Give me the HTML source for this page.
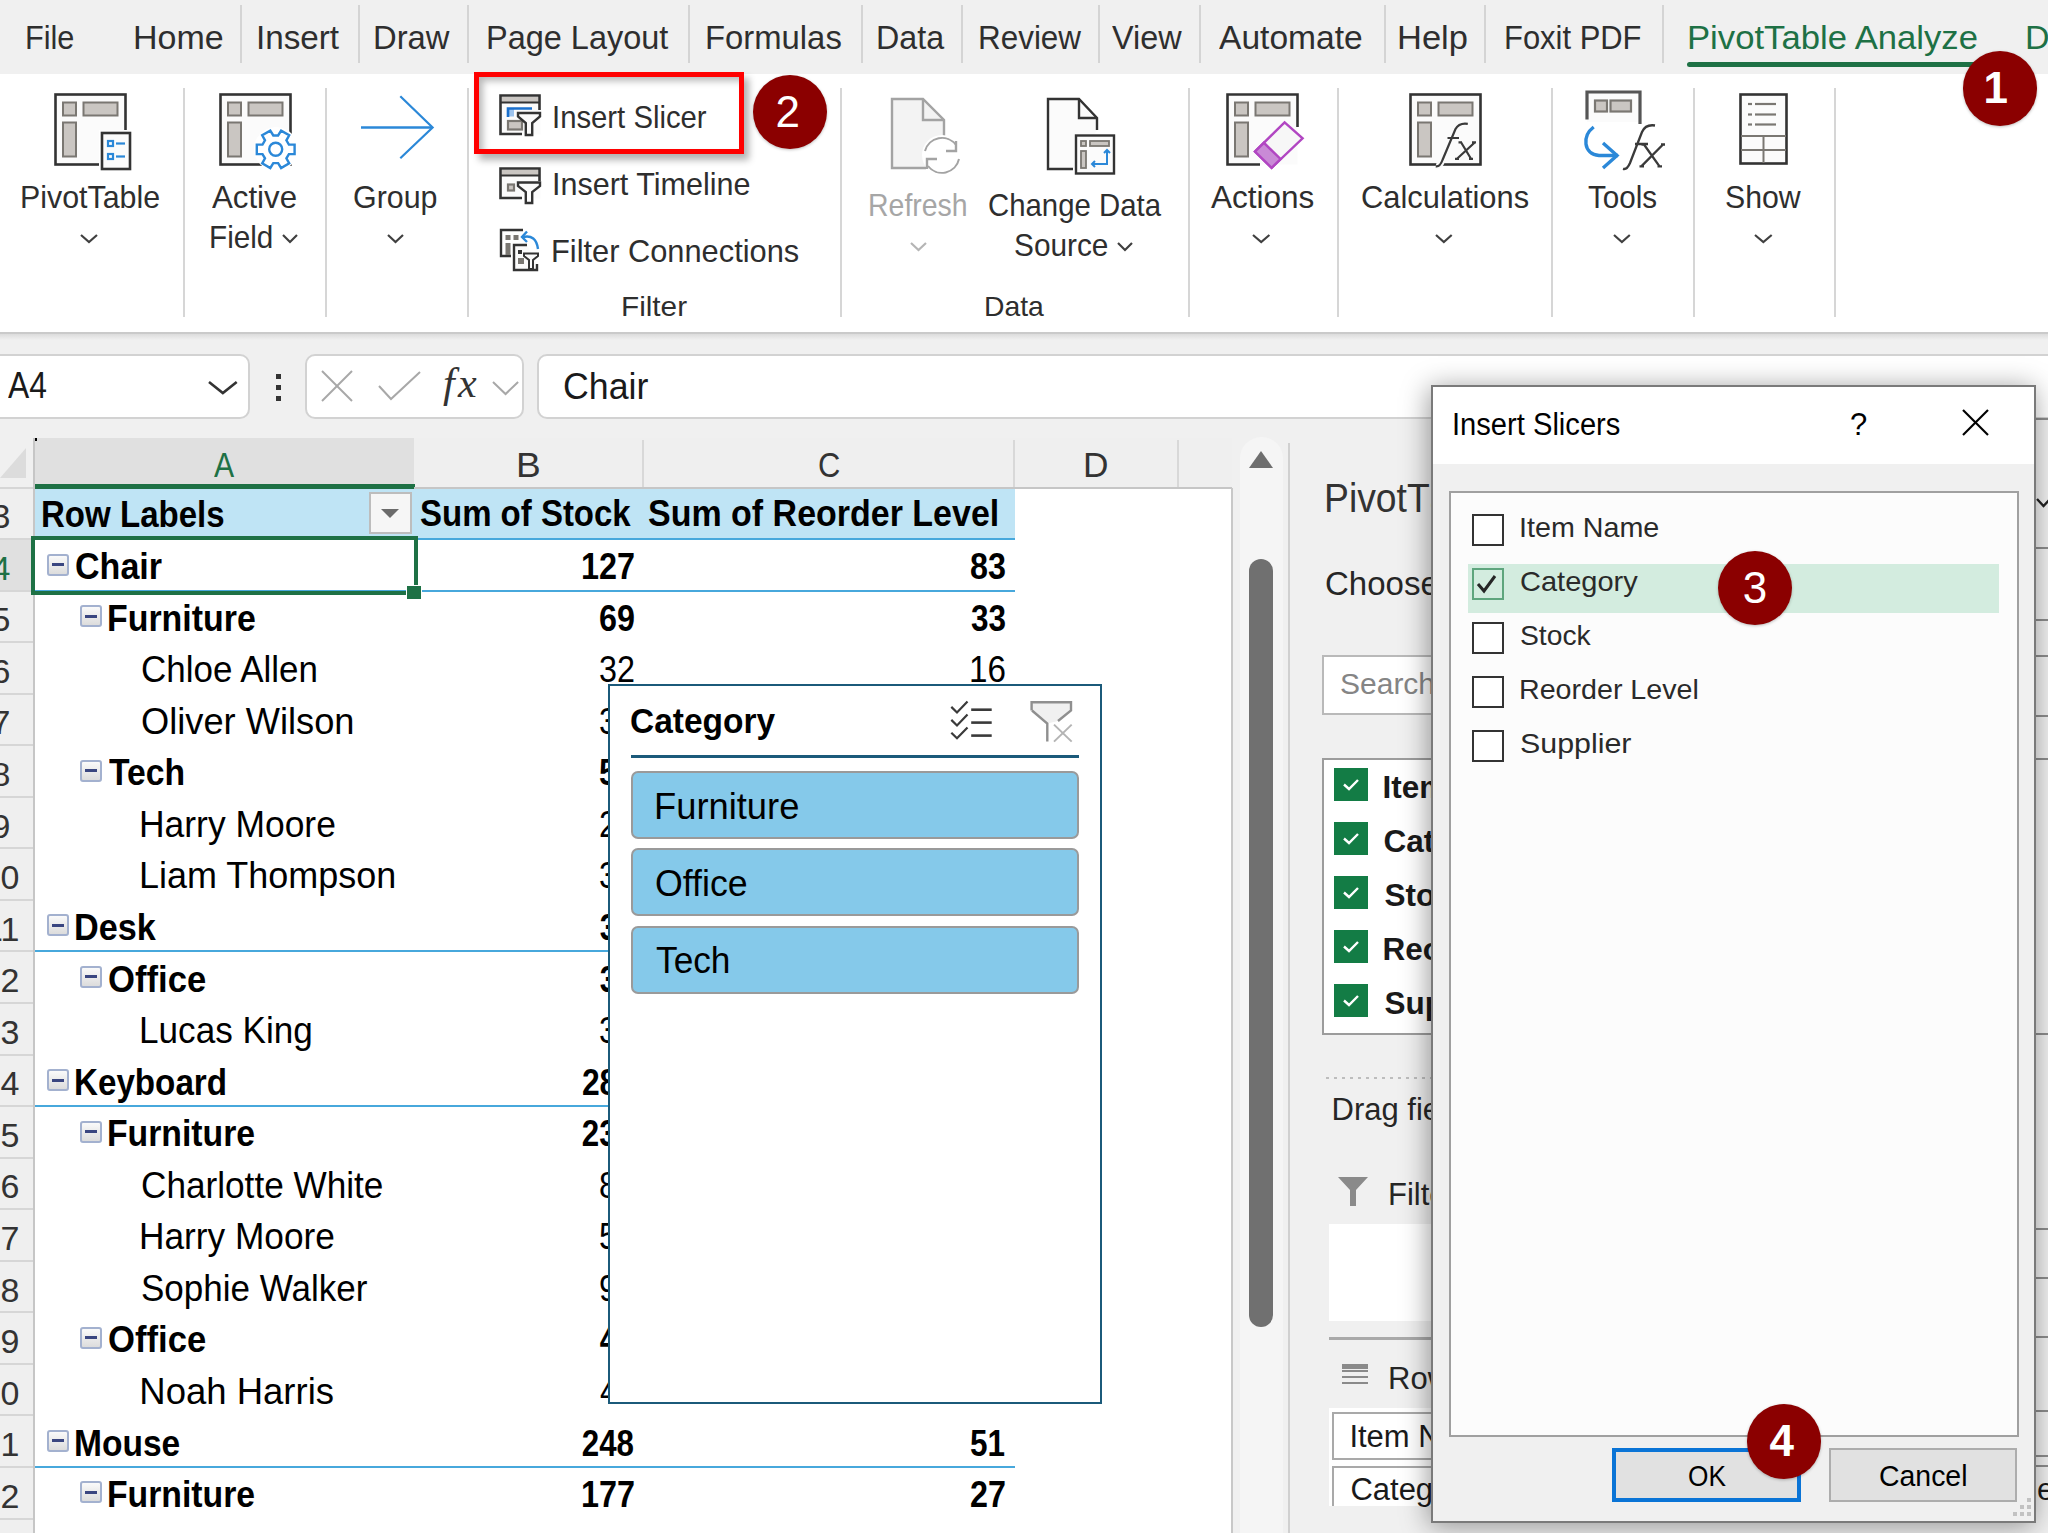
<!DOCTYPE html>
<html><head><meta charset="utf-8"><style>
html,body{margin:0;padding:0;}
body{width:2048px;height:1533px;overflow:hidden;position:relative;background:#f0f0f0;font-family:"Liberation Sans",sans-serif;}
.a{position:absolute;}
.t{position:absolute;white-space:nowrap;line-height:1;transform-origin:left;}
svg.a{overflow:visible;}
</style></head><body>
<div class="a" style="left:0px;top:0px;width:2048px;height:74px;background:#f0f0f0"></div>
<div class="t" style="left:24.9px;top:20.2px;font-size:34px;font-weight:400;color:#2e2e2e;transform:scaleX(0.9022);">File</div>
<div class="t" style="left:133.0px;top:20.2px;font-size:34px;font-weight:400;color:#2e2e2e;">Home</div>
<div class="t" style="left:255.8px;top:20.2px;font-size:34px;font-weight:400;color:#2e2e2e;transform:scaleX(0.9772);">Insert</div>
<div class="t" style="left:373.1px;top:20.2px;font-size:34px;font-weight:400;color:#2e2e2e;transform:scaleX(0.9642);">Draw</div>
<div class="t" style="left:486.1px;top:20.2px;font-size:34px;font-weight:400;color:#2e2e2e;transform:scaleX(0.9552);">Page Layout</div>
<div class="t" style="left:704.8px;top:20.2px;font-size:34px;font-weight:400;color:#2e2e2e;transform:scaleX(0.9654);">Formulas</div>
<div class="t" style="left:875.6px;top:20.2px;font-size:34px;font-weight:400;color:#2e2e2e;transform:scaleX(0.9484);">Data</div>
<div class="t" style="left:978.2px;top:20.2px;font-size:34px;font-weight:400;color:#2e2e2e;transform:scaleX(0.9243);">Review</div>
<div class="t" style="left:1112.0px;top:20.2px;font-size:34px;font-weight:400;color:#2e2e2e;transform:scaleX(0.9520);">View</div>
<div class="t" style="left:1219.0px;top:20.2px;font-size:34px;font-weight:400;color:#2e2e2e;transform:scaleX(0.9874);">Automate</div>
<div class="t" style="left:1397.0px;top:20.2px;font-size:34px;font-weight:400;color:#2e2e2e;transform:scaleX(1.0147);">Help</div>
<div class="t" style="left:1504.2px;top:20.2px;font-size:34px;font-weight:400;color:#2e2e2e;transform:scaleX(0.9100);">Foxit PDF</div>
<div class="t" style="left:1686.7px;top:20.2px;font-size:34px;font-weight:400;color:#1e7145;transform:scaleX(1.0195);">PivotTable Analyze</div>
<div class="t" style="left:2025.0px;top:20.2px;font-size:34px;font-weight:400;color:#1e7145;">D</div>
<div class="a" style="left:240px;top:5px;width:2px;height:58px;background:#d4d4d4"></div>
<div class="a" style="left:358px;top:5px;width:2px;height:58px;background:#d4d4d4"></div>
<div class="a" style="left:466.5px;top:5px;width:2px;height:58px;background:#d4d4d4"></div>
<div class="a" style="left:688px;top:5px;width:2px;height:58px;background:#d4d4d4"></div>
<div class="a" style="left:860.8px;top:5px;width:2px;height:58px;background:#d4d4d4"></div>
<div class="a" style="left:961.3px;top:5px;width:2px;height:58px;background:#d4d4d4"></div>
<div class="a" style="left:1097.7px;top:5px;width:2px;height:58px;background:#d4d4d4"></div>
<div class="a" style="left:1198.5px;top:5px;width:2px;height:58px;background:#d4d4d4"></div>
<div class="a" style="left:1383.6px;top:5px;width:2px;height:58px;background:#d4d4d4"></div>
<div class="a" style="left:1484.4px;top:5px;width:2px;height:58px;background:#d4d4d4"></div>
<div class="a" style="left:1662px;top:5px;width:2px;height:58px;background:#d4d4d4"></div>
<div class="a" style="left:1687px;top:61.5px;width:296px;height:5px;background:#1e7145;border-radius:3px"></div>
<div class="a" style="left:0px;top:346px;width:2048px;height:0px;box-shadow:0 -4px 10px rgba(0,0,0,0.10)"></div>
<div class="a" style="left:0px;top:74px;width:2048px;height:260px;background:#ffffff;border-bottom:2px solid #cacaca;box-sizing:border-box"></div>
<div class="a" style="left:0px;top:334px;width:2048px;height:6px;background:linear-gradient(#dcdcdc,#f0f0f0)"></div>
<div class="a" style="left:183px;top:88px;width:2px;height:229px;background:#d6d6d6"></div>
<div class="a" style="left:324.8px;top:88px;width:2px;height:229px;background:#d6d6d6"></div>
<div class="a" style="left:466.5px;top:88px;width:2px;height:229px;background:#d6d6d6"></div>
<div class="a" style="left:840px;top:88px;width:2px;height:229px;background:#d6d6d6"></div>
<div class="a" style="left:1188px;top:88px;width:2px;height:229px;background:#d6d6d6"></div>
<div class="a" style="left:1336.7px;top:88px;width:2px;height:229px;background:#d6d6d6"></div>
<div class="a" style="left:1551px;top:88px;width:2px;height:229px;background:#d6d6d6"></div>
<div class="a" style="left:1692.7px;top:88px;width:2px;height:229px;background:#d6d6d6"></div>
<div class="a" style="left:1834px;top:88px;width:2px;height:229px;background:#d6d6d6"></div>
<div class="t" style="left:20.4px;top:181.5px;font-size:31.5px;font-weight:400;color:#2e2e2e;transform:scaleX(0.9642);">PivotTable</div>
<div class="t" style="left:212.0px;top:181.5px;font-size:31.5px;font-weight:400;color:#2e2e2e;transform:scaleX(0.9911);">Active</div>
<div class="t" style="left:209.1px;top:222.3px;font-size:31.5px;font-weight:400;color:#2e2e2e;transform:scaleX(0.9420);">Field</div>
<div class="t" style="left:353.0px;top:181.5px;font-size:31.5px;font-weight:400;color:#2e2e2e;transform:scaleX(0.9648);">Group</div>
<div class="t" style="left:551.5px;top:102.1px;font-size:31.5px;font-weight:400;color:#2e2e2e;transform:scaleX(0.9297);">Insert Slicer</div>
<div class="t" style="left:551.5px;top:168.7px;font-size:31.5px;font-weight:400;color:#2e2e2e;transform:scaleX(0.9691);">Insert Timeline</div>
<div class="t" style="left:551.4px;top:235.7px;font-size:31.5px;font-weight:400;color:#2e2e2e;transform:scaleX(0.9777);">Filter Connections</div>
<div class="t" style="left:620.9px;top:292.1px;font-size:28.5px;font-weight:400;color:#2e2e2e;transform:scaleX(1.0430);">Filter</div>
<div class="t" style="left:868.2px;top:189.8px;font-size:31.5px;font-weight:400;color:#a6a6a6;transform:scaleX(0.9037);">Refresh</div>
<div class="t" style="left:987.6px;top:189.8px;font-size:31.5px;font-weight:400;color:#2e2e2e;transform:scaleX(0.9319);">Change Data</div>
<div class="t" style="left:1014.1px;top:230.3px;font-size:31.5px;font-weight:400;color:#2e2e2e;transform:scaleX(0.9462);">Source</div>
<div class="t" style="left:984.0px;top:292.1px;font-size:28.5px;font-weight:400;color:#2e2e2e;transform:scaleX(0.9940);">Data</div>
<div class="t" style="left:1211.0px;top:181.9px;font-size:31.5px;font-weight:400;color:#2e2e2e;">Actions</div>
<div class="t" style="left:1360.6px;top:181.9px;font-size:31.5px;font-weight:400;color:#2e2e2e;transform:scaleX(0.9798);">Calculations</div>
<div class="t" style="left:1587.6px;top:181.9px;font-size:31.5px;font-weight:400;color:#2e2e2e;transform:scaleX(0.9397);">Tools</div>
<div class="t" style="left:1725.0px;top:181.9px;font-size:31.5px;font-weight:400;color:#2e2e2e;transform:scaleX(0.9609);">Show</div>
<svg class="a" style="left:79px;top:233px" width="20" height="11"><polyline points="2,2 10.0,9 18,2" fill="none" stroke="#404040" stroke-width="2.2"/></svg>
<svg class="a" style="left:386px;top:233px" width="19" height="11"><polyline points="2,2 9.5,9 17,2" fill="none" stroke="#404040" stroke-width="2.2"/></svg>
<svg class="a" style="left:1250.6px;top:233px" width="20.40000000000009" height="11"><polyline points="2,2 10.200000000000045,9 18.40000000000009,2" fill="none" stroke="#404040" stroke-width="2.2"/></svg>
<svg class="a" style="left:1434px;top:233px" width="19.700000000000045" height="11"><polyline points="2,2 9.850000000000023,9 17.700000000000045,2" fill="none" stroke="#404040" stroke-width="2.2"/></svg>
<svg class="a" style="left:1611.7px;top:233px" width="19.799999999999955" height="11"><polyline points="2,2 9.899999999999977,9 17.799999999999955,2" fill="none" stroke="#404040" stroke-width="2.2"/></svg>
<svg class="a" style="left:1753px;top:233px" width="20.700000000000045" height="11"><polyline points="2,2 10.350000000000023,9 18.700000000000045,2" fill="none" stroke="#404040" stroke-width="2.2"/></svg>
<svg class="a" style="left:281px;top:233px" width="18" height="11"><polyline points="2,2 9.0,9 16,2" fill="none" stroke="#404040" stroke-width="2.2"/></svg>
<svg class="a" style="left:909px;top:241px" width="19" height="11"><polyline points="2,2 9.5,9 17,2" fill="none" stroke="#b5b5b5" stroke-width="2.2"/></svg>
<svg class="a" style="left:1116px;top:241px" width="18" height="11"><polyline points="2,2 9.0,9 16,2" fill="none" stroke="#404040" stroke-width="2.2"/></svg>
<svg class="a" style="left:54px;top:92.7px" width="80" height="80" viewBox="0 0 80 80"><rect x="1.5" y="1.5" width="70" height="70" fill="#fbfbfb" stroke="#333333" stroke-width="2.6"/><rect x="9" y="9.5" width="13" height="13" fill="#cac6c2" stroke="#7a7772" stroke-width="2"/><rect x="29.5" y="9.5" width="34" height="13" fill="#cac6c2" stroke="#7a7772" stroke-width="2"/><rect x="9" y="29.5" width="13" height="34" fill="#cac6c2" stroke="#7a7772" stroke-width="2"/><rect x="45" y="37" width="35" height="43" fill="#ffffff"/><rect x="48" y="40" width="28" height="36" fill="#fbfbfb" stroke="#333333" stroke-width="2.6"/><rect x="54" y="48" width="5" height="5" fill="none" stroke="#2b88d8" stroke-width="2.2"/><line x1="62" y1="50.5" x2="71" y2="50.5" stroke="#2b88d8" stroke-width="2.2"/><rect x="54" y="61" width="5" height="5" fill="none" stroke="#2b88d8" stroke-width="2.2"/><line x1="62" y1="63.5" x2="71" y2="63.5" stroke="#2b88d8" stroke-width="2.2"/></svg>
<svg class="a" style="left:219px;top:92.7px" width="80" height="80" viewBox="0 0 80 80"><rect x="1.5" y="1.5" width="70" height="70" fill="#fbfbfb" stroke="#333333" stroke-width="2.6"/><rect x="9" y="9.5" width="13" height="13" fill="#cac6c2" stroke="#7a7772" stroke-width="2"/><rect x="29.5" y="9.5" width="34" height="13" fill="#cac6c2" stroke="#7a7772" stroke-width="2"/><rect x="9" y="29.5" width="13" height="34" fill="#cac6c2" stroke="#7a7772" stroke-width="2"/><circle cx="57" cy="56" r="22" fill="#ffffff"/><polygon points="75.6,51.6 75.6,61.0 69.9,61.1 67.4,65.3 70.2,70.3 62.1,75.0 59.1,70.1 54.3,70.1 51.3,75.0 43.2,70.3 46.0,65.3 43.5,61.1 37.8,61.0 37.8,51.6 43.5,51.5 46.0,47.3 43.2,42.3 51.3,37.6 54.3,42.5 59.1,42.5 62.1,37.6 70.2,42.3 67.4,47.3 69.9,51.5" fill="#ffffff" stroke="#2b88d8" stroke-width="2.4"/><circle cx="56.7" cy="56.3" r="6.5" fill="none" stroke="#2b88d8" stroke-width="2.4"/></svg>
<svg class="a" style="left:355px;top:92px" width="85" height="72"><line x1="6" y1="35.5" x2="77" y2="35.5" stroke="#2b88d8" stroke-width="2.6"/><polyline points="45.3,4.3 77.6,35.5 45.3,66.3" fill="none" stroke="#2b88d8" stroke-width="2.2"/></svg>
<svg class="a" style="left:498px;top:94px" width="46" height="46" viewBox="0 0 46 46"><rect x="2.5" y="1.5" width="40" height="39" fill="#fbfbfb"/><path d="M 24 40 L 2.5 40 L 2.5 1.5 L 41.5 1.5 L 41.5 16" fill="none" stroke="#333333" stroke-width="2.6"/><rect x="4" y="3" width="36" height="5" fill="#cac6c2"/><line x1="2.5" y1="8.5" x2="41.5" y2="8.5" stroke="#333333" stroke-width="2.2"/><rect x="10" y="14.5" width="6" height="8" fill="#9cc3ee"/><path d="M 10 23 L 10 14.5 L 34 14.5" fill="none" stroke="#1a6fcc" stroke-width="2.6"/><rect x="10" y="27" width="14" height="8.5" fill="#cac6c2" stroke="#7a7772" stroke-width="2.2"/><path d="M 20 19 L 42 19 L 42 22.5 L 34.2 29 L 34.2 41 L 27.8 41 L 27.8 29 L 20 22.5 Z" fill="#fbfbfb" stroke="#333333" stroke-width="2.4" stroke-linejoin="miter"/></svg>
<svg class="a" style="left:498px;top:166.5px" width="46" height="46" viewBox="0 0 46 46"><rect x="2.5" y="1.5" width="40" height="30" fill="#fbfbfb"/><path d="M 24 31 L 2.5 31 L 2.5 1.5 L 41.5 1.5 L 41.5 14" fill="none" stroke="#333333" stroke-width="2.6"/><rect x="4" y="3" width="36" height="5" fill="#cac6c2"/><line x1="2.5" y1="8.5" x2="41.5" y2="8.5" stroke="#333333" stroke-width="2.2"/><rect x="10" y="17.5" width="6" height="6" fill="#cac6c2" stroke="#7a7772" stroke-width="2.2"/><path d="M 20 15.5 L 42 15.5 L 42 19 L 34.2 25 L 34.2 36 L 27.8 36 L 27.8 25 L 20 19 Z" fill="#fbfbfb" stroke="#333333" stroke-width="2.4" stroke-linejoin="miter"/></svg>
<svg class="a" style="left:499px;top:228px" width="44" height="44" viewBox="0 0 44 44"><path d="M 24 2 L 2 2 L 2 28 L 12 28" fill="none" stroke="#333333" stroke-width="2.4"/><rect x="6.5" y="7" width="5" height="5" fill="#7a7772"/><rect x="14.5" y="7" width="5" height="5" fill="#7a7772"/><rect x="6.5" y="15" width="5" height="12" fill="#7a7772"/><path d="M 28 17 L 15 17 L 15 42 L 38 42 L 38 36" fill="#fbfbfb" stroke="#333333" stroke-width="2.4"/><rect x="19" y="22" width="4" height="4" fill="#333333"/><rect x="19" y="30" width="6" height="6" fill="#7a7772"/><path d="M 25 25.5 L 39 25.5 L 39 28 L 34 32 L 34 41 L 30 41 L 30 32 L 25 28 Z" fill="#fbfbfb" stroke="#333333" stroke-width="2"/><path d="M 24 9 Q 37 6 39 21" fill="none" stroke="#2b88d8" stroke-width="2.4"/><polyline points="28,3.5 23,9 28,14" fill="none" stroke="#2b88d8" stroke-width="2.4"/></svg>
<svg class="a" style="left:889px;top:96px" width="62" height="80" viewBox="0 0 62 80"><path d="M 37 72 L 3 72 L 3 3 L 34 3 L 55 24 L 55 40" fill="#f3f3f3" stroke="#a3a3a3" stroke-width="2.4"/><path d="M 34 3 L 34 24 L 55 24" fill="none" stroke="#a3a3a3" stroke-width="2.4"/><circle cx="53" cy="59" r="20" fill="#ffffff"/><path d="M 36 55 A 17.5 17.5 0 0 1 67 49" fill="none" stroke="#a3a3a3" stroke-width="2"/><path d="M 70 63 A 17.5 17.5 0 0 1 39 70" fill="none" stroke="#a3a3a3" stroke-width="2"/><polyline points="57,55 67,55 67,45" fill="none" stroke="#a3a3a3" stroke-width="2.4"/><polyline points="48,63 38,63 38,73" fill="none" stroke="#a3a3a3" stroke-width="2.4"/></svg>
<svg class="a" style="left:1045px;top:96px" width="74" height="82" viewBox="0 0 74 82"><path d="M 28 73 L 3 73 L 3 3 L 34 3 L 52 22 L 52 34" fill="#fbfbfb" stroke="#333333" stroke-width="2.4"/><path d="M 34 3 L 34 22 L 52 22" fill="none" stroke="#333333" stroke-width="2.4"/><rect x="31" y="39.5" width="38" height="38" fill="#fbfbfb" stroke="#333333" stroke-width="2.4"/><rect x="36" y="45" width="5" height="5" fill="#cac6c2" stroke="#7a7772" stroke-width="1.8"/><rect x="45" y="45" width="19" height="5" fill="#cac6c2" stroke="#7a7772" stroke-width="1.8"/><rect x="36" y="55" width="5" height="17" fill="#cac6c2" stroke="#7a7772" stroke-width="1.8"/><polyline points="47,68 62,68 62,54" fill="none" stroke="#2b88d8" stroke-width="2"/><polyline points="59,57 62,54 65,57" fill="none" stroke="#2b88d8" stroke-width="2"/><polyline points="50,65 47,68 50,71" fill="none" stroke="#2b88d8" stroke-width="2"/></svg>
<svg class="a" style="left:1226.4px;top:93.2px" width="82" height="80" viewBox="0 0 82 80"><rect x="1.5" y="1.5" width="70" height="70" fill="#fbfbfb"/><path d="M 34 71.5 L 1.5 71.5 L 1.5 1.5 L 71.5 1.5 L 71.5 34" fill="none" stroke="#333333" stroke-width="2.6"/><rect x="9" y="9.5" width="13" height="13" fill="#cac6c2" stroke="#7a7772" stroke-width="2"/><rect x="29.5" y="9.5" width="34" height="13" fill="#cac6c2" stroke="#7a7772" stroke-width="2"/><rect x="9" y="29.5" width="13" height="34" fill="#cac6c2" stroke="#7a7772" stroke-width="2"/><polygon points="58.6,29.3 76.6,45.4 45.6,74.8 29,58.6" fill="#f7f7f7" stroke="#b146c2" stroke-width="2.4"/><polygon points="29,58.6 45.6,74.8 54.5,66 37.9,49.8" fill="#c98ad6" stroke="#b146c2" stroke-width="2.4"/></svg>
<svg class="a" style="left:1409.2px;top:93.2px" width="80" height="80" viewBox="0 0 80 80"><rect x="1.5" y="1.5" width="70" height="70" fill="#fbfbfb" stroke="#333333" stroke-width="2.6"/><rect x="9" y="9.5" width="13" height="13" fill="#cac6c2" stroke="#7a7772" stroke-width="2"/><rect x="29.5" y="9.5" width="34" height="13" fill="#cac6c2" stroke="#7a7772" stroke-width="2"/><rect x="9" y="29.5" width="13" height="34" fill="#cac6c2" stroke="#7a7772" stroke-width="2"/><path d="M 26.8 73.3 Q 31 74 33.5 67 L 46.5 36 Q 50 29.5 58.8 30.8 M 38.5 45 L 50 45 M 52 49.3 L 62 65.8 M 66 49.3 L 48 65.8 M 49.5 49.3 L 53 49.3 M 63 49.3 L 67 49.3 M 46 65.8 L 50 65.8 M 60 65.8 L 64 65.8" fill="none" stroke="#fbfbfb" stroke-width="6"/><path d="M 26.8 73.3 Q 31 74 33.5 67 L 46.5 36 Q 50 29.5 58.8 30.8 M 38.5 45 L 50 45 M 52 49.3 L 62 65.8 M 66 49.3 L 48 65.8 M 49.5 49.3 L 53 49.3 M 63 49.3 L 67 49.3 M 46 65.8 L 50 65.8 M 60 65.8 L 64 65.8" fill="none" stroke="#3a3a3a" stroke-width="2.2"/></svg>
<svg class="a" style="left:1583px;top:88px" width="90" height="86" viewBox="0 0 90 86"><rect x="4" y="4" width="53" height="30" fill="#fbfbfb"/><path d="M 4 31.5 L 4 4 L 57 4 L 57 36" fill="none" stroke="#555" stroke-width="3.2"/><rect x="12" y="12.5" width="12" height="11" fill="#cac6c2" stroke="#7a7772" stroke-width="2.2"/><rect x="27.5" y="12.5" width="20.5" height="11" fill="#cac6c2" stroke="#7a7772" stroke-width="2.2"/><path d="M 10.7 39 C -1 48 0 66 16 67.5 L 35 67.5" fill="none" stroke="#2b88d8" stroke-width="3.4"/><polyline points="20,55 34,67.5 20,80" fill="none" stroke="#2b88d8" stroke-width="3.4"/><path d="M 40 80.8 Q 44 82 47 75 L 59 44 Q 62.5 36 72 37.5 M 52 56 L 65 56 M 61 56.5 L 76.5 78.4 M 80 56.5 L 58.3 78.4 M 58.5 56.5 L 62.5 56.5 M 78 56.5 L 82 56.5 M 56.5 78.4 L 61 78.4 M 74.5 78.4 L 79 78.4" fill="none" stroke="#3a3a3a" stroke-width="2.3"/></svg>
<svg class="a" style="left:1738px;top:92px" width="52" height="74" viewBox="0 0 52 74"><rect x="2.5" y="2.5" width="46" height="69" fill="#fbfbfb" stroke="#333333" stroke-width="2.6"/><line x1="10" y1="12" x2="14" y2="12" stroke="#7a7772" stroke-width="2.2"/><line x1="17" y1="12" x2="38" y2="12" stroke="#7a7772" stroke-width="2.2"/><line x1="10" y1="22.5" x2="14" y2="22.5" stroke="#7a7772" stroke-width="2.2"/><line x1="17" y1="22.5" x2="38" y2="22.5" stroke="#7a7772" stroke-width="2.2"/><line x1="10" y1="32.5" x2="14" y2="32.5" stroke="#7a7772" stroke-width="2.2"/><line x1="17" y1="32.5" x2="38" y2="32.5" stroke="#7a7772" stroke-width="2.2"/><line x1="3" y1="44" x2="48" y2="44" stroke="#7a7772" stroke-width="2"/><line x1="3" y1="58" x2="48" y2="58" stroke="#7a7772" stroke-width="2"/><line x1="25.5" y1="44" x2="25.5" y2="71" stroke="#7a7772" stroke-width="2"/></svg>
<div class="a" style="left:-10px;top:354px;width:260px;height:65px;background:#fff;border:2px solid #d2d2d2;border-radius:10px;box-sizing:border-box"></div>
<div class="t" style="left:8.0px;top:368.3px;font-size:36px;font-weight:400;color:#1a1a1a;transform:scaleX(0.8835);">A4</div>
<svg class="a" style="left:207px;top:380px" width="31.69999999999999" height="15"><polyline points="2,2 15.849999999999994,13 29.69999999999999,2" fill="none" stroke="#333" stroke-width="2.6"/></svg>
<div class="a" style="left:276px;top:374px;width:5px;height:5px;background:#333"></div>
<div class="a" style="left:276px;top:385px;width:5px;height:5px;background:#333"></div>
<div class="a" style="left:276px;top:396px;width:5px;height:5px;background:#333"></div>
<div class="a" style="left:304.7px;top:354px;width:219px;height:65px;background:#fff;border:2px solid #d2d2d2;border-radius:10px;box-sizing:border-box"></div>
<svg class="a" style="left:320px;top:369px" width="36" height="36"><line x1="2" y1="2" x2="32" y2="32" stroke="#a8a8a8" stroke-width="2"/><line x1="32" y1="2" x2="2" y2="32" stroke="#a8a8a8" stroke-width="2"/></svg>
<svg class="a" style="left:376px;top:369px" width="48" height="34"><polyline points="3,17 15,30 44,3" fill="none" stroke="#a8a8a8" stroke-width="2"/></svg>
<div class="t" style="left:443.0px;top:362.4px;font-size:42px;font-weight:400;color:#333;font-family:'Liberation Serif',serif;"><i>f</i></div>
<div class="t" style="left:458.0px;top:362.4px;font-size:42px;font-weight:400;color:#333;font-family:'Liberation Serif',serif;"><i>x</i></div>
<svg class="a" style="left:491.4px;top:380px" width="29.100000000000023" height="16"><polyline points="2,2 14.550000000000011,14 27.100000000000023,2" fill="none" stroke="#a8a8a8" stroke-width="2"/></svg>
<div class="a" style="left:537px;top:354px;width:1600px;height:65px;background:#fff;border:2px solid #d2d2d2;border-radius:10px;box-sizing:border-box"></div>
<div class="t" style="left:563.0px;top:369.0px;font-size:36px;font-weight:400;color:#1a1a1a;transform:scaleX(0.9925);">Chair</div>
<div class="a" style="left:35px;top:438px;width:1197px;height:50px;background:#efefef"></div>
<div class="a" style="left:35px;top:438px;width:379px;height:50px;background:#e0e0e0"></div>
<div class="a" style="left:35px;top:484px;width:380px;height:5px;background:#1e7145"></div>
<div class="a" style="left:414px;top:486.5px;width:818px;height:2px;background:#c6c6c6"></div>
<div class="a" style="left:641.7px;top:440px;width:2px;height:47px;background:#d8d8d8"></div>
<div class="a" style="left:1013.2px;top:440px;width:2px;height:47px;background:#d8d8d8"></div>
<div class="a" style="left:1177.3px;top:440px;width:2px;height:47px;background:#d8d8d8"></div>
<div class="t" style="left:214.0px;top:446.9px;font-size:35px;font-weight:400;color:#1e7145;transform:scaleX(0.8625);">A</div>
<div class="t" style="left:515.7px;top:446.9px;font-size:35px;font-weight:400;color:#333;transform:scaleX(1.0600);">B</div>
<div class="t" style="left:817.8px;top:446.9px;font-size:35px;font-weight:400;color:#333;transform:scaleX(0.8826);">C</div>
<div class="t" style="left:1083.3px;top:446.9px;font-size:35px;font-weight:400;color:#333;transform:scaleX(1.0091);">D</div>
<svg class="a" style="left:0px;top:446px" width="30" height="34"><polygon points="26,2 26,32 0,32" fill="#dcdcdc"/></svg>
<div class="a" style="left:34px;top:438px;width:3px;height:3px;background:#000"></div>
<div class="a" style="left:0px;top:488px;width:35px;height:1045px;background:#efefef"></div>
<div class="a" style="left:33px;top:438px;width:2px;height:1095px;background:#c6c6c6"></div>
<div class="a" style="left:0px;top:539.05px;width:33px;height:51.55px;background:#e0e0e0"></div>
<div class="a" style="left:0px;top:486.5px;width:33px;height:2px;background:#d6d6d6"></div>
<div class="a" style="left:0px;top:538.05px;width:33px;height:2px;background:#d6d6d6"></div>
<div class="a" style="left:0px;top:589.6px;width:33px;height:2px;background:#d6d6d6"></div>
<div class="a" style="left:0px;top:641.15px;width:33px;height:2px;background:#d6d6d6"></div>
<div class="a" style="left:0px;top:692.7px;width:33px;height:2px;background:#d6d6d6"></div>
<div class="a" style="left:0px;top:744.25px;width:33px;height:2px;background:#d6d6d6"></div>
<div class="a" style="left:0px;top:795.8px;width:33px;height:2px;background:#d6d6d6"></div>
<div class="a" style="left:0px;top:847.3499999999999px;width:33px;height:2px;background:#d6d6d6"></div>
<div class="a" style="left:0px;top:898.9px;width:33px;height:2px;background:#d6d6d6"></div>
<div class="a" style="left:0px;top:950.45px;width:33px;height:2px;background:#d6d6d6"></div>
<div class="a" style="left:0px;top:1002.0px;width:33px;height:2px;background:#d6d6d6"></div>
<div class="a" style="left:0px;top:1053.55px;width:33px;height:2px;background:#d6d6d6"></div>
<div class="a" style="left:0px;top:1105.1px;width:33px;height:2px;background:#d6d6d6"></div>
<div class="a" style="left:0px;top:1156.65px;width:33px;height:2px;background:#d6d6d6"></div>
<div class="a" style="left:0px;top:1208.1999999999998px;width:33px;height:2px;background:#d6d6d6"></div>
<div class="a" style="left:0px;top:1259.75px;width:33px;height:2px;background:#d6d6d6"></div>
<div class="a" style="left:0px;top:1311.3px;width:33px;height:2px;background:#d6d6d6"></div>
<div class="a" style="left:0px;top:1362.85px;width:33px;height:2px;background:#d6d6d6"></div>
<div class="a" style="left:0px;top:1414.4px;width:33px;height:2px;background:#d6d6d6"></div>
<div class="a" style="left:0px;top:1465.9499999999998px;width:33px;height:2px;background:#d6d6d6"></div>
<div class="a" style="left:0px;top:1517.5px;width:33px;height:2px;background:#d6d6d6"></div>
<div class="a" style="left:0px;top:1569.05px;width:33px;height:2px;background:#d6d6d6"></div>
<div class="t" style="left:-589.6px;width:600px;text-align:right;transform-origin:right;top:499.2px;font-size:34px;font-weight:400;color:#333;">3</div>
<div class="t" style="left:-589.6px;width:600px;text-align:right;transform-origin:right;top:550.8px;font-size:34px;font-weight:400;color:#1e7145;">4</div>
<div class="t" style="left:-589.6px;width:600px;text-align:right;transform-origin:right;top:602.3px;font-size:34px;font-weight:400;color:#333;">5</div>
<div class="t" style="left:-589.6px;width:600px;text-align:right;transform-origin:right;top:653.9px;font-size:34px;font-weight:400;color:#333;">6</div>
<div class="t" style="left:-589.6px;width:600px;text-align:right;transform-origin:right;top:705.4px;font-size:34px;font-weight:400;color:#333;">7</div>
<div class="t" style="left:-589.6px;width:600px;text-align:right;transform-origin:right;top:757.0px;font-size:34px;font-weight:400;color:#333;">8</div>
<div class="t" style="left:-589.6px;width:600px;text-align:right;transform-origin:right;top:808.5px;font-size:34px;font-weight:400;color:#333;">9</div>
<div class="t" style="left:-580.6px;width:600px;text-align:right;transform-origin:right;top:860.1px;font-size:34px;font-weight:400;color:#333;">10</div>
<div class="t" style="left:-580.6px;width:600px;text-align:right;transform-origin:right;top:911.6px;font-size:34px;font-weight:400;color:#333;">11</div>
<div class="t" style="left:-580.6px;width:600px;text-align:right;transform-origin:right;top:963.2px;font-size:34px;font-weight:400;color:#333;">12</div>
<div class="t" style="left:-580.6px;width:600px;text-align:right;transform-origin:right;top:1014.7px;font-size:34px;font-weight:400;color:#333;">13</div>
<div class="t" style="left:-580.6px;width:600px;text-align:right;transform-origin:right;top:1066.3px;font-size:34px;font-weight:400;color:#333;">14</div>
<div class="t" style="left:-580.6px;width:600px;text-align:right;transform-origin:right;top:1117.8px;font-size:34px;font-weight:400;color:#333;">15</div>
<div class="t" style="left:-580.6px;width:600px;text-align:right;transform-origin:right;top:1169.4px;font-size:34px;font-weight:400;color:#333;">16</div>
<div class="t" style="left:-580.6px;width:600px;text-align:right;transform-origin:right;top:1220.9px;font-size:34px;font-weight:400;color:#333;">17</div>
<div class="t" style="left:-580.6px;width:600px;text-align:right;transform-origin:right;top:1272.5px;font-size:34px;font-weight:400;color:#333;">18</div>
<div class="t" style="left:-580.6px;width:600px;text-align:right;transform-origin:right;top:1324.0px;font-size:34px;font-weight:400;color:#333;">19</div>
<div class="t" style="left:-580.6px;width:600px;text-align:right;transform-origin:right;top:1375.6px;font-size:34px;font-weight:400;color:#333;">20</div>
<div class="t" style="left:-580.6px;width:600px;text-align:right;transform-origin:right;top:1427.1px;font-size:34px;font-weight:400;color:#333;">21</div>
<div class="t" style="left:-580.6px;width:600px;text-align:right;transform-origin:right;top:1478.7px;font-size:34px;font-weight:400;color:#333;">22</div>
<div class="a" style="left:35px;top:488.5px;width:1197px;height:1045px;background:#fff"></div>
<div class="a" style="left:1231px;top:488px;width:2px;height:1045px;background:#c8c8c8"></div>
<div class="a" style="left:35px;top:488.5px;width:980px;height:51px;background:#bfe4f5"></div>
<div class="a" style="left:35px;top:538px;width:980px;height:2px;background:#47a8dc"></div>
<div class="a" style="left:35px;top:589.8px;width:980px;height:2px;background:#47a8dc"></div>
<div class="a" style="left:35px;top:950.4px;width:980px;height:2px;background:#47a8dc"></div>
<div class="a" style="left:35px;top:1105.05px;width:980px;height:2px;background:#47a8dc"></div>
<div class="a" style="left:35px;top:1465.9px;width:980px;height:2px;background:#47a8dc"></div>
<div class="a" style="left:369px;top:492.3px;width:43px;height:42px;background:#f6f6f6;border:2px solid #bdbdbd;box-sizing:border-box"></div>
<svg class="a" style="left:381px;top:509px" width="20" height="12"><polygon points="0,0 18,0 9,9" fill="#6b6b6b"/></svg>
<div class="t" style="left:40.9px;top:497.1px;font-size:36.5px;font-weight:700;color:#000;transform:scaleX(0.9057);">Row Labels</div>
<div class="t" style="left:419.7px;top:496.1px;font-size:36.5px;font-weight:700;color:#000;transform:scaleX(0.9033);">Sum of Stock</div>
<div class="t" style="left:648.1px;top:496.1px;font-size:36.5px;font-weight:700;color:#000;transform:scaleX(0.9310);">Sum of Reorder Level</div>
<div class="a" style="left:46.7px;top:553.55px;width:22px;height:22px;box-sizing:border-box;border:2px solid #a3b1cf;border-radius:3px;background:linear-gradient(#fafafa,#dcdcdc)"></div><div class="a" style="left:51.7px;top:563.05px;width:12px;height:3px;background:#3a4680"></div>
<div class="t" style="left:75.0px;top:549.1px;font-size:36.5px;font-weight:700;color:#000;transform:scaleX(0.9327);">Chair</div>
<div class="t" style="left:35.2px;width:600px;text-align:right;transform-origin:right;top:549.1px;font-size:36.5px;font-weight:700;color:#000;transform:scaleX(0.8872);">127</div>
<div class="t" style="left:406.2px;width:600px;text-align:right;transform-origin:right;top:549.1px;font-size:36.5px;font-weight:700;color:#000;transform:scaleX(0.8851);">83</div>
<div class="a" style="left:80.2px;top:605.1px;width:22px;height:22px;box-sizing:border-box;border:2px solid #a3b1cf;border-radius:3px;background:linear-gradient(#fafafa,#dcdcdc)"></div><div class="a" style="left:85.2px;top:614.6px;width:12px;height:3px;background:#3a4680"></div>
<div class="t" style="left:107.1px;top:600.7px;font-size:36.5px;font-weight:700;color:#000;transform:scaleX(0.9285);">Furniture</div>
<div class="t" style="left:35.2px;width:600px;text-align:right;transform-origin:right;top:600.7px;font-size:36.5px;font-weight:700;color:#000;transform:scaleX(0.8851);">69</div>
<div class="t" style="left:406.1px;width:600px;text-align:right;transform-origin:right;top:600.7px;font-size:36.5px;font-weight:700;color:#000;transform:scaleX(0.8626);">33</div>
<div class="t" style="left:141.3px;top:652.2px;font-size:36.5px;font-weight:400;color:#000;transform:scaleX(0.9582);">Chloe Allen</div>
<div class="t" style="left:35.2px;width:600px;text-align:right;transform-origin:right;top:652.2px;font-size:36.5px;font-weight:400;color:#000;transform:scaleX(0.8851);">32</div>
<div class="t" style="left:406.2px;width:600px;text-align:right;transform-origin:right;top:652.2px;font-size:36.5px;font-weight:400;color:#000;transform:scaleX(0.9089);">16</div>
<div class="t" style="left:141.3px;top:703.8px;font-size:36.5px;font-weight:400;color:#000;transform:scaleX(0.9930);">Oliver Wilson</div>
<div class="t" style="left:35.2px;width:600px;text-align:right;transform-origin:right;top:703.8px;font-size:36.5px;font-weight:400;color:#000;transform:scaleX(0.8851);">37</div>
<div class="a" style="left:80.2px;top:759.75px;width:22px;height:22px;box-sizing:border-box;border:2px solid #a3b1cf;border-radius:3px;background:linear-gradient(#fafafa,#dcdcdc)"></div><div class="a" style="left:85.2px;top:769.25px;width:12px;height:3px;background:#3a4680"></div>
<div class="t" style="left:109.0px;top:755.3px;font-size:36.5px;font-weight:700;color:#000;transform:scaleX(0.9238);">Tech</div>
<div class="t" style="left:34.3px;width:600px;text-align:right;transform-origin:right;top:755.3px;font-size:36.5px;font-weight:700;color:#000;transform:scaleX(0.8626);">58</div>
<div class="t" style="left:139.4px;top:806.9px;font-size:36.5px;font-weight:400;color:#000;transform:scaleX(0.9707);">Harry Moore</div>
<div class="t" style="left:35.2px;width:600px;text-align:right;transform-origin:right;top:806.9px;font-size:36.5px;font-weight:400;color:#000;transform:scaleX(0.8851);">21</div>
<div class="t" style="left:139.3px;top:858.4px;font-size:36.5px;font-weight:400;color:#000;transform:scaleX(0.9856);">Liam Thompson</div>
<div class="t" style="left:35.2px;width:600px;text-align:right;transform-origin:right;top:858.4px;font-size:36.5px;font-weight:400;color:#000;transform:scaleX(0.8851);">37</div>
<div class="a" style="left:46.7px;top:914.4px;width:22px;height:22px;box-sizing:border-box;border:2px solid #a3b1cf;border-radius:3px;background:linear-gradient(#fafafa,#dcdcdc)"></div><div class="a" style="left:51.7px;top:923.9px;width:12px;height:3px;background:#3a4680"></div>
<div class="t" style="left:74.0px;top:910.0px;font-size:36.5px;font-weight:700;color:#000;transform:scaleX(0.9377);">Desk</div>
<div class="t" style="left:34.3px;width:600px;text-align:right;transform-origin:right;top:910.0px;font-size:36.5px;font-weight:700;color:#000;transform:scaleX(0.8412);">35</div>
<div class="a" style="left:80.2px;top:965.95px;width:22px;height:22px;box-sizing:border-box;border:2px solid #a3b1cf;border-radius:3px;background:linear-gradient(#fafafa,#dcdcdc)"></div><div class="a" style="left:85.2px;top:975.45px;width:12px;height:3px;background:#3a4680"></div>
<div class="t" style="left:108.1px;top:961.5px;font-size:36.5px;font-weight:700;color:#000;transform:scaleX(0.9497);">Office</div>
<div class="t" style="left:34.3px;width:600px;text-align:right;transform-origin:right;top:961.5px;font-size:36.5px;font-weight:700;color:#000;transform:scaleX(0.8412);">35</div>
<div class="t" style="left:139.4px;top:1013.1px;font-size:36.5px;font-weight:400;color:#000;transform:scaleX(0.9624);">Lucas King</div>
<div class="t" style="left:35.2px;width:600px;text-align:right;transform-origin:right;top:1013.1px;font-size:36.5px;font-weight:400;color:#000;transform:scaleX(0.8851);">35</div>
<div class="a" style="left:46.7px;top:1069.05px;width:22px;height:22px;box-sizing:border-box;border:2px solid #a3b1cf;border-radius:3px;background:linear-gradient(#fafafa,#dcdcdc)"></div><div class="a" style="left:51.7px;top:1078.55px;width:12px;height:3px;background:#3a4680"></div>
<div class="t" style="left:74.1px;top:1064.6px;font-size:36.5px;font-weight:700;color:#000;transform:scaleX(0.9089);">Keyboard</div>
<div class="t" style="left:35.1px;width:600px;text-align:right;transform-origin:right;top:1064.6px;font-size:36.5px;font-weight:700;color:#000;transform:scaleX(0.8720);">280</div>
<div class="a" style="left:80.2px;top:1120.6px;width:22px;height:22px;box-sizing:border-box;border:2px solid #a3b1cf;border-radius:3px;background:linear-gradient(#fafafa,#dcdcdc)"></div><div class="a" style="left:85.2px;top:1130.1px;width:12px;height:3px;background:#3a4680"></div>
<div class="t" style="left:107.2px;top:1116.2px;font-size:36.5px;font-weight:700;color:#000;transform:scaleX(0.9247);">Furniture</div>
<div class="t" style="left:34.3px;width:600px;text-align:right;transform-origin:right;top:1116.2px;font-size:36.5px;font-weight:700;color:#000;transform:scaleX(0.8574);">235</div>
<div class="t" style="left:141.3px;top:1167.7px;font-size:36.5px;font-weight:400;color:#000;transform:scaleX(0.9637);">Charlotte White</div>
<div class="t" style="left:35.2px;width:600px;text-align:right;transform-origin:right;top:1167.7px;font-size:36.5px;font-weight:400;color:#000;transform:scaleX(0.8851);">81</div>
<div class="t" style="left:139.4px;top:1219.3px;font-size:36.5px;font-weight:400;color:#000;transform:scaleX(0.9657);">Harry Moore</div>
<div class="t" style="left:35.2px;width:600px;text-align:right;transform-origin:right;top:1219.3px;font-size:36.5px;font-weight:400;color:#000;transform:scaleX(0.8851);">56</div>
<div class="t" style="left:141.3px;top:1270.8px;font-size:36.5px;font-weight:400;color:#000;transform:scaleX(0.9589);">Sophie Walker</div>
<div class="t" style="left:35.2px;width:600px;text-align:right;transform-origin:right;top:1270.8px;font-size:36.5px;font-weight:400;color:#000;transform:scaleX(0.8851);">98</div>
<div class="a" style="left:80.2px;top:1326.8px;width:22px;height:22px;box-sizing:border-box;border:2px solid #a3b1cf;border-radius:3px;background:linear-gradient(#fafafa,#dcdcdc)"></div><div class="a" style="left:85.2px;top:1336.3px;width:12px;height:3px;background:#3a4680"></div>
<div class="t" style="left:108.1px;top:1322.4px;font-size:36.5px;font-weight:700;color:#000;transform:scaleX(0.9497);">Office</div>
<div class="t" style="left:34.3px;width:600px;text-align:right;transform-origin:right;top:1322.4px;font-size:36.5px;font-weight:700;color:#000;transform:scaleX(0.8412);">45</div>
<div class="t" style="left:139.3px;top:1373.9px;font-size:36.5px;font-weight:400;color:#000;">Noah Harris</div>
<div class="t" style="left:35.1px;width:600px;text-align:right;transform-origin:right;top:1373.9px;font-size:36.5px;font-weight:400;color:#000;transform:scaleX(0.8626);">45</div>
<div class="a" style="left:46.7px;top:1429.9px;width:22px;height:22px;box-sizing:border-box;border:2px solid #a3b1cf;border-radius:3px;background:linear-gradient(#fafafa,#dcdcdc)"></div><div class="a" style="left:51.7px;top:1439.4px;width:12px;height:3px;background:#3a4680"></div>
<div class="t" style="left:74.1px;top:1425.5px;font-size:36.5px;font-weight:700;color:#000;transform:scaleX(0.9188);">Mouse</div>
<div class="t" style="left:34.3px;width:600px;text-align:right;transform-origin:right;top:1425.5px;font-size:36.5px;font-weight:700;color:#000;transform:scaleX(0.8574);">248</div>
<div class="t" style="left:405.3px;width:600px;text-align:right;transform-origin:right;top:1425.5px;font-size:36.5px;font-weight:700;color:#000;transform:scaleX(0.8626);">51</div>
<div class="a" style="left:80.2px;top:1481.4499999999998px;width:22px;height:22px;box-sizing:border-box;border:2px solid #a3b1cf;border-radius:3px;background:linear-gradient(#fafafa,#dcdcdc)"></div><div class="a" style="left:85.2px;top:1490.9499999999998px;width:12px;height:3px;background:#3a4680"></div>
<div class="t" style="left:107.2px;top:1477.0px;font-size:36.5px;font-weight:700;color:#000;transform:scaleX(0.9247);">Furniture</div>
<div class="t" style="left:35.2px;width:600px;text-align:right;transform-origin:right;top:1477.0px;font-size:36.5px;font-weight:700;color:#000;transform:scaleX(0.8872);">177</div>
<div class="t" style="left:406.2px;width:600px;text-align:right;transform-origin:right;top:1477.0px;font-size:36.5px;font-weight:700;color:#000;transform:scaleX(0.8851);">27</div>
<div class="a" style="left:31px;top:536px;width:387px;height:59px;border:4.5px solid #1e7145;box-sizing:border-box"></div>
<div class="a" style="left:406px;top:585px;width:14px;height:13px;background:#1e7145;border:1px solid #fff"></div>
<div class="a" style="left:608px;top:683.5px;width:494px;height:720px;background:#fff;border:2px solid #1b5a7a;box-sizing:border-box"></div>
<div class="t" style="left:630.4px;top:703.4px;font-size:35px;font-weight:700;color:#000;transform:scaleX(0.9561);">Category</div>
<div class="a" style="left:631px;top:755px;width:448px;height:2.5px;background:#1b5a7a"></div>
<div class="a" style="left:631px;top:771px;width:448px;height:68px;background:#85c9ea;border:2px solid #9a9a9a;border-radius:7px;box-sizing:border-box"></div>
<div class="t" style="left:654.0px;top:788.5px;font-size:36px;font-weight:400;color:#000;transform:scaleX(1.0090);">Furniture</div>
<div class="a" style="left:631px;top:848px;width:448px;height:68px;background:#85c9ea;border:2px solid #9a9a9a;border-radius:7px;box-sizing:border-box"></div>
<div class="t" style="left:655.0px;top:865.5px;font-size:36px;font-weight:400;color:#000;transform:scaleX(0.9918);">Office</div>
<div class="a" style="left:631px;top:925.7px;width:448px;height:68px;background:#85c9ea;border:2px solid #9a9a9a;border-radius:7px;box-sizing:border-box"></div>
<div class="t" style="left:656.0px;top:943.2px;font-size:36px;font-weight:400;color:#000;transform:scaleX(0.9794);">Tech</div>
<svg class="a" style="left:948px;top:699px" width="48" height="44" viewBox="0 0 48 44"><polyline points="3.3,7.9 9,13.5 19.5,2.6" fill="none" stroke="#3a3a3a" stroke-width="2.2"/><polyline points="3.3,20.9 9,26.5 19.5,15.6" fill="none" stroke="#3a3a3a" stroke-width="2.2"/><polyline points="3.3,33.7 9,39.3 19.5,28.400000000000002" fill="none" stroke="#3a3a3a" stroke-width="2.2"/><line x1="23.2" y1="10.7" x2="43.7" y2="10.7" stroke="#3a3a3a" stroke-width="2.6"/><line x1="23.2" y1="23.6" x2="43.7" y2="23.6" stroke="#3a3a3a" stroke-width="2.6"/><line x1="23.2" y1="36.6" x2="43.7" y2="36.6" stroke="#3a3a3a" stroke-width="2.6"/></svg>
<svg class="a" style="left:1029px;top:700px" width="46" height="46" viewBox="0 0 46 46"><polygon points="2.6,2.2 42,2.2 42,10.5 29,21 18.3,23.5 2.6,10.5" fill="#f0f0f0"/><path d="M 2.6 10.5 L 2.6 2.2 L 42 2.2 L 42 10.5 L 29 21" fill="none" stroke="#8f8f8f" stroke-width="2.4"/><path d="M 3 10.5 L 18.3 23.5 L 18.3 41.6" fill="none" stroke="#8f8f8f" stroke-width="2.4"/><line x1="25" y1="24.6" x2="42.7" y2="41.6" stroke="#b4b4b4" stroke-width="2"/><line x1="42.7" y1="24.6" x2="25" y2="41.6" stroke="#b4b4b4" stroke-width="2"/></svg>
<div class="a" style="left:1233px;top:420px;width:56px;height:1113px;background:#f0f0f0"></div>
<div class="a" style="left:1239.5px;top:437px;width:43px;height:1200px;background:#f5f5f5;border-radius:22px"></div>
<svg class="a" style="left:1249px;top:451px" width="26" height="20"><polygon points="12,0 24,17 0,17" fill="#6e6e6e"/></svg>
<div class="a" style="left:1249px;top:559px;width:24px;height:768px;background:#707070;border-radius:12px"></div>
<div class="a" style="left:1288px;top:443px;width:2px;height:1090px;background:#d0d0d0"></div>
<div class="a" style="left:1290px;top:419px;width:758px;height:1114px;background:#f0f0f0"></div>
<div class="t" style="left:1324.0px;top:477.8px;font-size:41px;font-weight:400;color:#333;transform:scaleX(0.91);font-kerning:none;">PivotTable Fields</div>
<div class="t" style="left:1325.0px;top:567.1px;font-size:33px;font-weight:400;color:#262626;">Choose fields to add to report:</div>
<div class="a" style="left:1322px;top:655px;width:700px;height:60px;background:#fff;border:2px solid #b9b9b9;box-sizing:border-box"></div>
<div class="t" style="left:1340.0px;top:668.6px;font-size:30px;font-weight:400;color:#858585;">Search</div>
<div class="a" style="left:1322px;top:758.4px;width:700px;height:277px;background:#fff;border:2px solid #9c9c9c;box-sizing:border-box"></div>
<div class="a" style="left:1334.4px;top:767.7px;width:33.4px;height:33px;background:#137c45"></div>
<svg class="a" style="left:1334px;top:767.7px" width="34" height="33"><polyline points="10,16.5 15,21 24,12" fill="none" stroke="#fff" stroke-width="2.4"/></svg>
<div class="t" style="left:1382.5px;top:771.7px;font-size:31.5px;font-weight:700;color:#1a1a1a;">Item Name</div>
<div class="a" style="left:1334.4px;top:821.8000000000001px;width:33.4px;height:33px;background:#137c45"></div>
<svg class="a" style="left:1334px;top:821.8000000000001px" width="34" height="33"><polyline points="10,16.5 15,21 24,12" fill="none" stroke="#fff" stroke-width="2.4"/></svg>
<div class="t" style="left:1383.5px;top:825.8px;font-size:31.5px;font-weight:700;color:#1a1a1a;">Category</div>
<div class="a" style="left:1334.4px;top:875.9000000000001px;width:33.4px;height:33px;background:#137c45"></div>
<svg class="a" style="left:1334px;top:875.9000000000001px" width="34" height="33"><polyline points="10,16.5 15,21 24,12" fill="none" stroke="#fff" stroke-width="2.4"/></svg>
<div class="t" style="left:1384.5px;top:879.9px;font-size:31.5px;font-weight:700;color:#1a1a1a;">Stock</div>
<div class="a" style="left:1334.4px;top:930.0px;width:33.4px;height:33px;background:#137c45"></div>
<svg class="a" style="left:1334px;top:930.0px" width="34" height="33"><polyline points="10,16.5 15,21 24,12" fill="none" stroke="#fff" stroke-width="2.4"/></svg>
<div class="t" style="left:1382.5px;top:934.0px;font-size:31.5px;font-weight:700;color:#1a1a1a;">Reorder Level</div>
<div class="a" style="left:1334.4px;top:984.1px;width:33.4px;height:33px;background:#137c45"></div>
<svg class="a" style="left:1334px;top:984.1px" width="34" height="33"><polyline points="10,16.5 15,21 24,12" fill="none" stroke="#fff" stroke-width="2.4"/></svg>
<div class="t" style="left:1384.5px;top:988.1px;font-size:31.5px;font-weight:700;color:#1a1a1a;">Supplier</div>
<div class="a" style="left:1326px;top:1077px;width:700px;height:2px;background:repeating-linear-gradient(90deg,#bdbdbd 0 3px,transparent 3px 8px)"></div>
<div class="t" style="left:1331.5px;top:1093.8px;font-size:31px;font-weight:400;color:#262626;">Drag fields between areas below:</div>
<svg class="a" style="left:1338px;top:1177px" width="32" height="30"><polygon points="0,0 30,0 18,13 18,29 12,29 12,13" fill="#8a8a8a"/></svg>
<div class="t" style="left:1388.0px;top:1178.8px;font-size:31px;font-weight:400;color:#262626;">Filters</div>
<div class="a" style="left:1329.4px;top:1224px;width:700px;height:97px;background:#fff"></div>
<div class="a" style="left:1329px;top:1337px;width:700px;height:2.5px;background:#a9a9a9"></div>
<div class="a" style="left:1342px;top:1364px;width:26px;height:2.2px;background:#8a8a8a"></div>
<div class="a" style="left:1342px;top:1370px;width:26px;height:2.2px;background:#8a8a8a"></div>
<div class="a" style="left:1342px;top:1376px;width:26px;height:2.2px;background:#8a8a8a"></div>
<div class="a" style="left:1342px;top:1382px;width:26px;height:2.2px;background:#8a8a8a"></div>
<div class="a" style="left:1342px;top:1363.5px;width:26px;height:5px;background:#8a8a8a"></div>
<div class="t" style="left:1388.0px;top:1362.5px;font-size:31px;font-weight:400;color:#262626;">Rows</div>
<div class="a" style="left:1329px;top:1408px;width:700px;height:98px;background:#fff"></div>
<div class="a" style="left:1332px;top:1412.3px;width:700px;height:48px;background:#fff;border:2px solid #a9a9a9;box-sizing:border-box"></div>
<div class="t" style="left:1349.4px;top:1421.4px;font-size:31px;font-weight:400;color:#1a1a1a;">Item Name</div>
<div class="a" style="left:1332px;top:1466px;width:700px;height:40px;background:#fff;border:2px solid #a9a9a9;border-bottom:none;box-sizing:border-box"></div>
<div class="t" style="left:1350.4px;top:1474.3px;font-size:31px;font-weight:400;color:#1a1a1a;">Category</div>
<div class="a" style="left:2036px;top:417.8px;width:12px;height:2px;background:#8c8c8c"></div>
<div class="a" style="left:2036px;top:546.5px;width:12px;height:2px;background:#8c8c8c"></div>
<div class="a" style="left:2036px;top:619px;width:12px;height:2px;background:#8c8c8c"></div>
<div class="a" style="left:2036px;top:655.4px;width:12px;height:2px;background:#8c8c8c"></div>
<div class="a" style="left:2036px;top:715px;width:12px;height:2px;background:#8c8c8c"></div>
<div class="a" style="left:2036px;top:758px;width:12px;height:2px;background:#8c8c8c"></div>
<div class="a" style="left:2036px;top:1033px;width:12px;height:2px;background:#8c8c8c"></div>
<div class="a" style="left:2036px;top:1228px;width:12px;height:2px;background:#8c8c8c"></div>
<div class="a" style="left:2036px;top:1277px;width:12px;height:2px;background:#8c8c8c"></div>
<div class="a" style="left:2036px;top:1336px;width:12px;height:2px;background:#8c8c8c"></div>
<div class="a" style="left:2036px;top:1409.7px;width:12px;height:2px;background:#8c8c8c"></div>
<div class="a" style="left:2036px;top:1455px;width:12px;height:2px;background:#8c8c8c"></div>
<div class="a" style="left:2036px;top:1464.6px;width:12px;height:2px;background:#8c8c8c"></div>
<div class="t" style="left:2037.0px;top:1473.8px;font-size:31px;font-weight:400;color:#1a1a1a;">e</div>
<svg class="a" style="left:2035px;top:497px" width="17" height="11"><polyline points="2,2 8.5,9 15,2" fill="none" stroke="#222" stroke-width="2.4"/></svg>
<div class="a" style="left:1431px;top:385px;width:605px;height:1138px;box-shadow:-2px 3px 26px rgba(0,0,0,0.40)"></div>
<div class="a" style="left:1431px;top:385px;width:605px;height:1138px;background:#f0f0f0;border:2px solid #7a7a7a;box-sizing:border-box"></div>
<div class="a" style="left:1433px;top:387px;width:601px;height:76.5px;background:#fff"></div>
<div class="t" style="left:1452.1px;top:408.8px;font-size:31px;font-weight:400;color:#000;transform:scaleX(0.9397);">Insert Slicers</div>
<div class="t" style="left:1850.0px;top:408.8px;font-size:31px;font-weight:400;color:#000;">?</div>
<svg class="a" style="left:1962px;top:409px" width="28" height="28"><line x1="1" y1="1" x2="26" y2="26" stroke="#000" stroke-width="2.2"/><line x1="26" y1="1" x2="1" y2="26" stroke="#000" stroke-width="2.2"/></svg>
<div class="a" style="left:1448.5px;top:490.5px;width:570.5px;height:946px;background:#fcfcfc;border:2px solid #a0a0a0;box-sizing:border-box"></div>
<div class="a" style="left:1468px;top:564px;width:531px;height:49px;background:#d3ecdf"></div>
<div class="a" style="left:1471.5px;top:513.5px;width:32px;height:32px;background:#fff;border:2px solid #333;box-sizing:border-box"></div>
<div class="t" style="left:1519.0px;top:514.3px;font-size:28px;font-weight:400;color:#2a2a2a;transform:scaleX(1.0242);">Item Name</div>
<div class="a" style="left:1471.5px;top:567.5px;width:32px;height:32px;background:#d3ecdf;border:2px solid #5ea57d;box-sizing:border-box"></div>
<svg class="a" style="left:1471px;top:567.5px" width="32" height="32"><polyline points="7,16 13,23 24,8" fill="none" stroke="#262626" stroke-width="3"/></svg>
<div class="t" style="left:1520.0px;top:568.3px;font-size:28px;font-weight:400;color:#2a2a2a;transform:scaleX(1.0363);">Category</div>
<div class="a" style="left:1471.5px;top:621.5px;width:32px;height:32px;background:#fff;border:2px solid #333;box-sizing:border-box"></div>
<div class="t" style="left:1520.0px;top:622.3px;font-size:28px;font-weight:400;color:#2a2a2a;transform:scaleX(1.0096);">Stock</div>
<div class="a" style="left:1471.5px;top:675.5px;width:32px;height:32px;background:#fff;border:2px solid #333;box-sizing:border-box"></div>
<div class="t" style="left:1519.0px;top:676.3px;font-size:28px;font-weight:400;color:#2a2a2a;transform:scaleX(1.0223);">Reorder Level</div>
<div class="a" style="left:1471.5px;top:729.5px;width:32px;height:32px;background:#fff;border:2px solid #333;box-sizing:border-box"></div>
<div class="t" style="left:1519.9px;top:730.3px;font-size:28px;font-weight:400;color:#2a2a2a;transform:scaleX(1.0847);">Supplier</div>
<div class="a" style="left:1612.4px;top:1447.8px;width:188.2px;height:54.1px;background:#e1e1e1;border:4.5px solid #0a74d6;box-sizing:border-box"></div>
<div class="t" style="left:1687.5px;top:1461.7px;font-size:29px;font-weight:400;color:#000;transform:scaleX(0.9048);">OK</div>
<div class="a" style="left:1828.8px;top:1447.8px;width:187.8px;height:54.1px;background:#e1e1e1;border:2px solid #adadad;box-sizing:border-box"></div>
<div class="t" style="left:1878.6px;top:1461.7px;font-size:29px;font-weight:400;color:#000;transform:scaleX(0.9803);">Cancel</div>
<div class="a" style="left:2027px;top:1498px;width:4px;height:4px;background:#c2c2c2"></div>
<div class="a" style="left:2020px;top:1505px;width:4px;height:4px;background:#c2c2c2"></div>
<div class="a" style="left:2027px;top:1505px;width:4px;height:4px;background:#c2c2c2"></div>
<div class="a" style="left:2013px;top:1512px;width:4px;height:4px;background:#c2c2c2"></div>
<div class="a" style="left:2020px;top:1512px;width:4px;height:4px;background:#c2c2c2"></div>
<div class="a" style="left:2027px;top:1512px;width:4px;height:4px;background:#c2c2c2"></div>
<div class="a" style="left:474px;top:72.3px;width:270px;height:82.1px;border:5px solid #ff0000;box-sizing:border-box;box-shadow:5px 6px 7px rgba(0,0,0,0.30), inset 5px 5px 7px -1px rgba(0,0,0,0.28)"></div>
<div class="a" style="left:752.7px;top:74.7px;width:74.6px;height:74.6px;background:#8b0000;border-radius:50%;box-shadow:0 1px 3px rgba(0,0,0,0.25)"></div>
<div class="t" style="left:775.5px;top:90.3px;font-size:44px;font-weight:400;color:#fff;">2</div>
<div class="a" style="left:1962.9px;top:51.3px;width:74.6px;height:74.6px;background:#8b0000;border-radius:50%;box-shadow:0 1px 3px rgba(0,0,0,0.25)"></div>
<div class="t" style="left:1983.5px;top:65.8px;font-size:44px;font-weight:700;color:#fff;">1</div>
<div class="a" style="left:1717.7px;top:550.7px;width:74.6px;height:74.6px;background:#8b0000;border-radius:50%;box-shadow:0 1px 3px rgba(0,0,0,0.25)"></div>
<div class="t" style="left:1742.8px;top:566.0px;font-size:44px;font-weight:400;color:#fff;">3</div>
<div class="a" style="left:1746.7px;top:1404.2px;width:74.6px;height:74.6px;background:#8b0000;border-radius:50%;box-shadow:0 1px 3px rgba(0,0,0,0.25)"></div>
<div class="t" style="left:1769.5px;top:1418.6px;font-size:44px;font-weight:700;color:#fff;">4</div>
</body></html>
